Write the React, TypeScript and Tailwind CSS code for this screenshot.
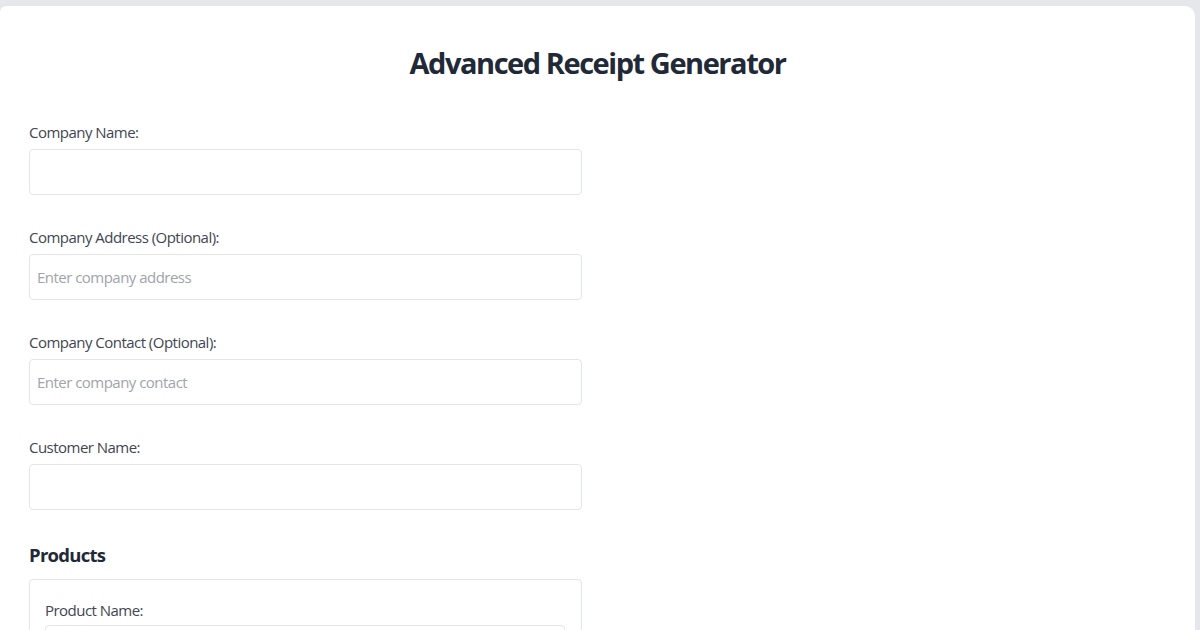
const font = { fontFamily: '"Open Sans", "Noto Sans", sans-serif' };

function Field({ label, placeholder }: { label: string; placeholder?: string }) {
  return (
    <div className="mb-[30px]">
      <label className="block text-[15px] leading-[24px] text-[#3f4652] mb-[5px] tracking-[-0.035em]">{label}</label>
      <input
        type="text"
        placeholder={placeholder}
        className="block w-full h-[46px] px-[7px] rounded-[4px] border border-[#e3e5e8] text-[15px] tracking-[-0.035em] placeholder:text-[#a0a4ab] outline-none"
      />
    </div>
  );
}

export default function App() {
  return (
    <div className="min-h-screen bg-[#e5e7eb] pt-[6px] pr-[5px] overflow-hidden" style={font}>
      <div className="bg-white rounded-tr-[10px] rounded-tl-[6px] min-h-[640px] px-[29px] pt-[39px]">
        <h1 className="text-center text-[29px] leading-[36px] font-bold text-[#1f2937] tracking-[-0.05em] mb-[39px]">
          Advanced Receipt Generator
        </h1>

        <div className="grid grid-cols-2 gap-8">
          <div>
            <Field label="Company Name:" />
            <Field label="Company Address (Optional):" placeholder="Enter company address" />
            <Field label="Company Contact (Optional):" placeholder="Enter company contact" />
            <Field label="Customer Name:" />

            <h2 className="mt-[31px] text-[18.5px] leading-[28px] font-bold text-[#1f2937] tracking-[-0.04em] mb-[10px]">Products</h2>
            <div className="border border-[#e3e5e8] rounded-[4px] pl-[15px] pr-4 pt-[18px] pb-4">
              <label className="block text-[15px] leading-[24px] text-[#3f4652] mb-[3px] tracking-[-0.035em]">Product Name:</label>
              <input type="text" className="block w-full h-[46px] rounded-[4px] border border-[#e3e5e8]" />
            </div>
          </div>
          <div />
        </div>
      </div>
    </div>
  );
}
